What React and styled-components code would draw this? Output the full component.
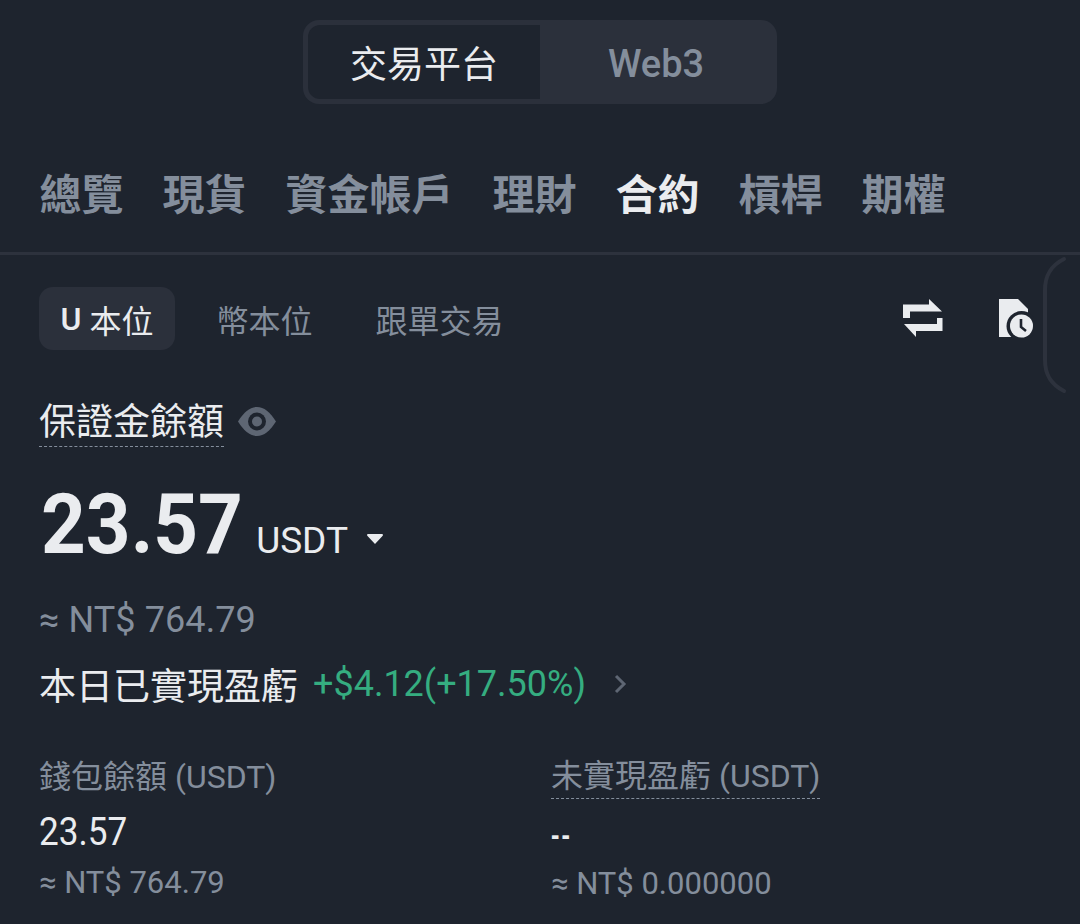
import React from "react";
import styled, { createGlobalStyle } from "styled-components";

const cjk = `Roboto, "Noto Sans CJK TC", sans-serif`;

const GlobalStyle = createGlobalStyle`
  html, body {
    margin: 0;
    padding: 0;
    background: #1e242e;
    height: 924px;
    overflow: hidden;
  }
  body {
    font-family: ${cjk};
    color: #eaecef;
  }
`;

const Page = styled.div`
  position: relative;
  width: 1080px;
  height: 924px;
  overflow: hidden;
  padding-top: 20px;
  box-sizing: border-box;
`;

const SwitchRow = styled.div`
  display: flex;
  justify-content: center;
`;

const Switch = styled.div`
  display: flex;
  width: 474px;
  height: 84px;
  box-sizing: border-box;
  padding: 5px;
  background: #2b303b;
  border-radius: 16px;
`;

const SwitchItem = styled.div`
  flex: 1;
  display: flex;
  align-items: center;
  justify-content: center;
  box-sizing: border-box;
  font-size: ${(p) => (p.$active ? 37 : 38)}px;
  font-weight: ${(p) => (p.$active ? 400 : 500)};
  padding-top: ${(p) => (p.$active ? 0 : 3)}px;
  color: ${(p) => (p.$active ? "#eaecef" : "#848e9c")};
  background: ${(p) => (p.$active ? "#1e242e" : "transparent")};
  border-radius: 12px 0 0 12px;
`;

const MainTabs = styled.div`
  display: flex;
  gap: 39px;
  height: 151px;
  box-sizing: border-box;
  padding: 65px 39.5px 0;
  border-bottom: 3px solid #2d323d;
`;

const MainTab = styled.div`
  font-size: 42px;
  line-height: 54px;
  font-weight: 700;
  color: ${(p) => (p.$active ? "#eaecef" : "#848e9c")};
`;

const SubBar = styled.div`
  display: flex;
  align-items: center;
  height: 63px;
  margin-top: 32px;
  padding: 0 46px 0 39px;
`;

const SubTabs = styled.div`
  display: flex;
  align-items: center;
  gap: 20px;
  flex: 1;
`;

const SubTab = styled.div`
  height: 63px;
  display: flex;
  align-items: center;
  padding: 0 21.5px;
  border-radius: 14px;
  font-size: 32px;
  white-space: pre;
  color: ${(p) => (p.$active ? "#eaecef" : "#848e9c")};
  background: ${(p) => (p.$active ? "#2b303b" : "transparent")};
`;

const UnitLetter = styled.span`
  font-weight: 500;
`;

const IconGroup = styled.div`
  display: flex;
  align-items: flex-start;
  gap: 56px;
`;

const Handle = styled.svg`
  position: absolute;
  left: 1040px;
  top: 254px;
`;

const Body = styled.div`
  padding: 0 39px;
`;

const LabelRow = styled.div`
  display: flex;
  align-items: center;
  gap: 14px;
  margin-top: 49px;
`;

const DottedLabel = styled.span`
  display: inline-block;
  font-size: ${(p) => p.$size || 37}px;
  line-height: ${(p) => p.$lh || 47}px;
  color: ${(p) => p.$color || "#eaecef"};
  border-bottom: 1.5px dashed #848e9c;
`;

const Eye = styled.svg`
  margin-bottom: 4px;
`;

const BalanceRow = styled.div`
  display: flex;
  align-items: baseline;
  margin-top: 35px;
  line-height: 86px;
`;

const BalanceValue = styled.span`
  display: inline-block;
  font-size: 84px;
  font-weight: 700;
  transform: scaleX(0.93);
  transform-origin: left center;
  margin: 0 -17px 0 2px;
`;

const Currency = styled.span`
  font-size: 37px;
  margin-left: 15px;
`;

const Caret = styled.svg`
  margin: 12px 0 0 18px;
  align-self: center;
`;

const Fiat = styled.div`
  font-size: ${(p) => p.$size || 36}px;
  line-height: ${(p) => p.$lh || 44}px;
  letter-spacing: ${(p) => (p.$size ? 0 : 0.1)}px;
  color: #848e9c;
  margin-top: ${(p) => p.$top || 0}px;
`;

const PnlRow = styled.div`
  display: flex;
  align-items: center;
  margin-top: 18px;
  height: 48px;
`;

const PnlLabel = styled.span`
  font-size: 37px;
`;

const PnlValue = styled.span`
  font-size: 36px;
  color: #35ad80;
  margin-left: 15px;
`;

const Chevron = styled.svg`
  margin-left: 27px;
`;

const Stats = styled.div`
  display: grid;
  grid-template-columns: 512px 1fr;
  margin-top: 47px;
`;

const StatLabel = styled.div`
  font-size: 32px;
  line-height: 44px;
  color: #848e9c;
`;

const StatValue = styled.div`
  font-size: 39px;
  line-height: ${(p) => (p.$dash ? 52 : 44)}px;
  margin: 11px 0 ${(p) => (p.$dash ? -8 : 0)}px;
  font-weight: ${(p) => (p.$dash ? 500 : 400)};
  letter-spacing: ${(p) => (p.$dash ? 3 : 0)}px;
  transform: scaleX(${(p) => (p.$dash ? 0.64 : 0.9)});
  transform-origin: left center;
`;

function SwapIcon() {
  return (
    <svg width="40" height="38" viewBox="0 0 40 38" fill="#eaecef">
      <path d="M0 5.5h26V0l13 12.5H7V19H0z" />
      <path d="M39.5 19v13H13v6L1 25h33v-6z" />
    </svg>
  );
}

function FileClockIcon() {
  return (
    <svg width="35" height="39" viewBox="0 0 35 39">
      <path d="M0 0h19l10 10v28H0z" fill="#eaecef" />
      <circle cx="22.5" cy="27" r="15" fill="#1e242e" />
      <circle cx="22.5" cy="27" r="11.5" fill="#eaecef" />
      <path d="M22 20v8l5 4" fill="none" stroke="#1e242e" strokeWidth="2.6" />
    </svg>
  );
}

function EyeIcon() {
  return (
    <Eye width="38" height="29" viewBox="0 0 38 29">
      <path d="M0 14.5C6 5 12 0 19 0s13 5 19 14.5C32 24 26 29 19 29S6 24 0 14.5z" fill="#5e6673" />
      <circle cx="19" cy="14.5" r="9" fill="#1e242e" />
      <circle cx="19" cy="14.5" r="5" fill="#5e6673" />
    </Eye>
  );
}

export default function App() {
  return (
    <Page>
      <GlobalStyle />
      <SwitchRow>
        <Switch>
          <SwitchItem $active>交易平台</SwitchItem>
          <SwitchItem>Web3</SwitchItem>
        </Switch>
      </SwitchRow>
      <MainTabs>
        {["總覽", "現貨", "資金帳戶", "理財", "合約", "槓桿", "期權"].map((t) => (
          <MainTab key={t} $active={t === "合約"}>{t}</MainTab>
        ))}
      </MainTabs>
      <SubBar>
        <SubTabs>
          <SubTab $active><UnitLetter>U</UnitLetter> 本位</SubTab>
          <SubTab>幣本位</SubTab>
          <SubTab>跟單交易</SubTab>
        </SubTabs>
        <IconGroup>
          <SwapIcon />
          <FileClockIcon />
        </IconGroup>
      </SubBar>
      <Handle width="30" height="142" viewBox="0 0 30 142" fill="none">
        <path d="M24 5C10 12 5 22 5 36v70c0 14 5 24 19 31" stroke="#2d323d" strokeWidth="4" strokeLinecap="round" />
      </Handle>
      <Body>
        <LabelRow>
          <DottedLabel>保證金餘額</DottedLabel>
          <EyeIcon />
        </LabelRow>
        <BalanceRow>
          <BalanceValue>23.57</BalanceValue>
          <Currency>USDT</Currency>
          <Caret width="18" height="12" viewBox="0 0 18 12">
            <path d="M2 1h14a1 1 0 0 1 .7 1.7L9 11 1.3 2.7A1 1 0 0 1 2 1z" fill="#eaecef" />
          </Caret>
        </BalanceRow>
        <Fiat $top={14}>≈ NT$ 764.79</Fiat>
        <PnlRow>
          <PnlLabel>本日已實現盈虧</PnlLabel>
          <PnlValue>+$4.12(+17.50%)</PnlValue>
          <Chevron width="14" height="22" viewBox="0 0 14 22" fill="none">
            <path d="M3 3l8 8-8 8" stroke="#5e6673" strokeWidth="3" />
          </Chevron>
        </PnlRow>
        <Stats>
          <div>
            <StatLabel>錢包餘額 (USDT)</StatLabel>
            <StatValue>23.57</StatValue>
            <Fiat $size={31} $lh={40} $top={9}>≈ NT$ 764.79</Fiat>
          </div>
          <div>
            <DottedLabel $size={32} $lh={43} $color="#848e9c">未實現盈虧 (USDT)</DottedLabel>
            <StatValue $dash>--</StatValue>
            <Fiat $size={31} $lh={40} $top={10}>≈ NT$ 0.000000</Fiat>
          </div>
        </Stats>
      </Body>
    </Page>
  );
}
